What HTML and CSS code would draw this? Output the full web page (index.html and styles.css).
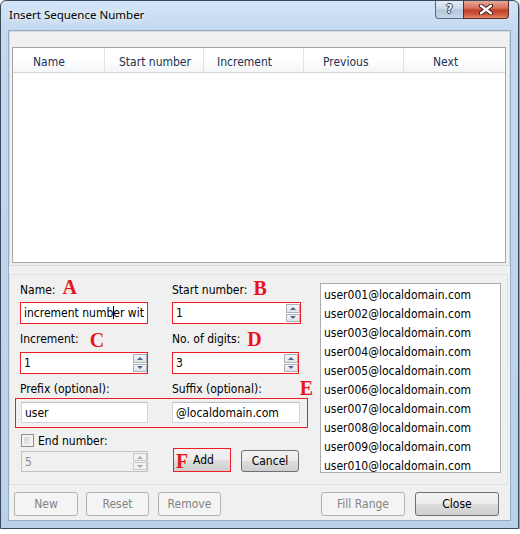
FILE: index.html
```html
<!DOCTYPE html>
<html>
<head>
<meta charset="utf-8">
<title>Insert Sequence Number</title>
<link rel="stylesheet" href="styles.css">
</head>
<body>
<div class="window">
  <div class="titlebar">
    <span class="title">Insert Sequence Number</span>
    <div class="caption-btns">
      <div class="cap-help">?</div>
      <div class="cap-close">
        <svg width="16" height="11" viewBox="0 0 16 11">
          <path d="M3 1.8 L13 9.2 M13 1.8 L3 9.2" stroke="#3d1a12" stroke-width="4.2" stroke-linecap="round" fill="none"/>
          <path d="M3 1.8 L13 9.2 M13 1.8 L3 9.2" stroke="#ffffff" stroke-width="2.4" stroke-linecap="round" fill="none"/>
        </svg>
      </div>
    </div>
  </div>
  <div class="client">
    <div class="top-panel">
      <div class="listview">
        <div class="lv-header">
          <div class="lv-col c1">Name</div>
          <div class="lv-col c2">Start number</div>
          <div class="lv-col c3">Increment</div>
          <div class="lv-col c4">Previous</div>
          <div class="lv-col c5">Next</div>
        </div>
      </div>
    </div>
    <div class="form-panel">
      <div class="form">
        <div class="row r-label1">
          <div class="lbl">Name:<span class="mark m-a">A</span></div>
          <div class="lbl">Start number:<span class="mark m-b">B</span></div>
        </div>
        <div class="row r-input1">
          <div class="field red"><span class="val">increment numb<span class="caret"></span>er wit</span></div>
          <div class="field red"><span class="val">1</span>
            <div class="spinner"><div class="spin-btn"><i class="arr-up"></i></div><div class="spin-btn"><i class="arr-down"></i></div></div>
          </div>
        </div>
        <div class="row r-label2">
          <div class="lbl">Increment:<span class="mark m-c">C</span></div>
          <div class="lbl">No. of digits:<span class="mark m-d">D</span></div>
        </div>
        <div class="row r-input2">
          <div class="field red"><span class="val">1</span>
            <div class="spinner"><div class="spin-btn"><i class="arr-up"></i></div><div class="spin-btn"><i class="arr-down"></i></div></div>
          </div>
          <div class="field red narrow"><span class="val">3</span>
            <div class="spinner"><div class="spin-btn"><i class="arr-up"></i></div><div class="spin-btn"><i class="arr-down"></i></div></div>
          </div>
        </div>
        <div class="row r-label3">
          <div class="lbl">Prefix (optional):</div>
          <div class="lbl lbl-e">Suffix (optional):<span class="mark m-e">E</span></div>
        </div>
        <div class="redbox">
          <div class="field plain"><span class="val">user</span></div>
          <div class="field plain"><span class="val">@localdomain.com</span></div>
        </div>
        <div class="row r-check">
          <div class="chk-wrap"><span class="chk"></span><span>End number:</span></div>
        </div>
        <div class="row r-last">
          <div class="field disabled"><span class="val">5</span>
            <div class="spinner dis"><div class="spin-btn"><i class="arr-up"></i></div><div class="spin-btn"><i class="arr-down"></i></div></div>
          </div>
          <div class="btn-pair">
            <div class="btn btn-add"><span class="mark m-f">F</span>Add</div>
            <div class="btn btn-cancel">Cancel</div>
          </div>
        </div>
      </div>
      <div class="listbox">
        <div class="li">user001@localdomain.com</div>
        <div class="li">user002@localdomain.com</div>
        <div class="li">user003@localdomain.com</div>
        <div class="li">user004@localdomain.com</div>
        <div class="li">user005@localdomain.com</div>
        <div class="li">user006@localdomain.com</div>
        <div class="li">user007@localdomain.com</div>
        <div class="li">user008@localdomain.com</div>
        <div class="li">user009@localdomain.com</div>
        <div class="li">user010@localdomain.com</div>
      </div>
    </div>
    <div class="btn-row">
      <div class="btn dis b-new">New</div>
      <div class="btn dis b-reset">Reset</div>
      <div class="btn dis b-remove">Remove</div>
      <div class="btn dis b-fill">Fill Range</div>
      <div class="btn b-close">Close</div>
    </div>
  </div>
</div>
</body>
</html>
```

FILE: styles.css
```css
* { box-sizing: border-box; }
body {
  margin: 0;
  background: #ffffff;
  font-family: "DejaVu Sans Condensed", "DejaVu Sans", sans-serif;
  font-stretch: semi-condensed;
  font-size: 12px;
  color: #000;
}
.window {
  width: 519px;
  height: 529px;
  border: 1px solid #3a4a5c;
  border-radius: 6px 6px 0 0;
  background: linear-gradient(to bottom, #d3e5f7 0, #c3d9f0 29px, #b9d1ea 100%);
  padding: 0 7px 7px 7px;
  box-shadow: 3px 3px 5px rgba(0,0,0,0.45);
  display: flex;
  flex-direction: column;
}
.titlebar {
  height: 29px;
  display: flex;
  align-items: flex-start;
  justify-content: space-between;
  flex: none;
}
.title {
  margin-left: 1px;
  margin-top: 7px;
  font-family: "Noto Sans", "Open Sans", sans-serif;
  font-stretch: normal;
  font-size: 11.5px;
  line-height: 14px;
  color: #000;
  text-shadow: 0 0 6px #eef6ff, 0 0 10px #ffffff;
}
.caption-btns {
  display: flex;
  margin-right: 2px;
}
.cap-help {
  width: 28px;
  height: 18px;
  border: 1px solid #5b6b7e;
  border-top: none;
  border-right: none;
  border-radius: 0 0 0 4px;
  background: linear-gradient(to bottom, #e3ecf6 0, #cbd9e9 45%, #b3c6dc 55%, #c8d8ea 100%);
  color: #fff;
  font-family: "DejaVu Sans", sans-serif;
  font-weight: bold;
  font-size: 12px;
  line-height: 17px;
  text-align: center;
  text-shadow: 1px 0 0 #2c3d52, -1px 0 0 #2c3d52, 0 1px 0 #2c3d52, 0 -1px 0 #2c3d52;
}
.cap-close {
  width: 46px;
  height: 18px;
  border: 1px solid #5e2d25;
  border-top: none;
  border-radius: 0 0 4px 0;
  background: linear-gradient(to bottom, #e9a898 0, #d8735e 40%, #c4412b 55%, #cf5a41 80%, #e08a6c 100%);
  display: flex;
  align-items: center;
  justify-content: center;
}
.client {
  flex: 1;
  background: #f0f0f0;
  border: 1px solid #9aabbd;
  display: flex;
  flex-direction: column;
}
.top-panel {
  height: 235px;
  border: 1px solid #d3dae2;
  padding: 15px 3px 2px 2px;
  flex: none;
}
.listview {
  height: 216px;
  background: #fff;
  border: 1px solid #a5a5a5;
}
.lv-header {
  display: flex;
  height: 25px;
  border-bottom: 1px solid #d5d5d5;
  background: linear-gradient(to bottom, #ffffff 0, #ffffff 50%, #f4f5f7 100%);
}
.lv-col {
  border-right: 1px solid #e2e3e5;
  color: #1e3152;
  padding-top: 5px;
  line-height: 18px;
  white-space: nowrap;
}
.c1 { width: 92px; padding-left: 20px; }
.c2 { width: 99px; padding-left: 14px; }
.c3 { width: 100px; padding-left: 13px; }
.c4 { width: 100px; padding-left: 19px; }
.c5 { width: 101px; padding-left: 29px; border-right: none; }

.form-panel {
  margin-top: 8px;
  margin-right: 2px;
  height: 211px;
  border: 1px solid #dae1e8;
  padding: 8px 6px 11px 10px;
  display: flex;
  flex: none;
}
.form {
  width: 282px;
  display: flex;
  flex-direction: column;
}
.row {
  display: grid;
  grid-template-columns: 128px 129px;
  column-gap: 24px;
}
.lbl {
  height: 14px;
  line-height: 14px;
  display: flex;
  align-items: center;
  white-space: nowrap;
}
.r-input1 { margin-top: 5px; }
.r-label2 { margin-top: 8px; }
.r-input2 { margin-top: 6px; }
.r-label3 { margin-top: 8px; }
.mark {
  color: #e8151c;
  font-family: "Liberation Serif", serif;
  font-stretch: normal;
  font-weight: bold;
  font-size: 20px;
  line-height: 14px;
}
.m-a { margin-left: 7px; transform: translateY(-3px); }
.m-b { margin-left: 6px; transform: translateY(-2px); }
.m-c { margin-left: 11px; transform: translateY(1px); }
.m-d { margin-left: 7px; transform: translateY(0px); }
.lbl-e { overflow: visible; }
.m-e { margin-left: auto; margin-right: -12px; transform: translateY(-1px); }

.field {
  height: 22px;
  background: #fff;
  border: 1px solid #abadb3;
  display: flex;
  align-items: center;
  padding-left: 3px;
  overflow: hidden;
}
.field.red { border-color: #ee1c25; }
.field.narrow { width: 127px; }
.val {
  flex: 1;
  white-space: nowrap;
  overflow: hidden;
  line-height: 14px;
}
.caret {
  display: inline-block;
  width: 1px;
  height: 13px;
  background: #000;
  vertical-align: -2px;
  margin-right: -1px;
}
.spinner {
  width: 14px;
  align-self: stretch;
  margin: 1px 0 1px 0;
  display: flex;
  flex-direction: column;
  gap: 1px;
}
.spin-btn {
  flex: 1;
  border: 1px solid #adb1b7;
  background: linear-gradient(to bottom, #f6f7f9, #dfe3e8);
  display: flex;
  align-items: center;
  justify-content: center;
}
.arr-up {
  width: 0; height: 0;
  border-left: 3px solid transparent;
  border-right: 3px solid transparent;
  border-bottom: 3px solid #4d6390;
}
.arr-down {
  width: 0; height: 0;
  border-left: 3px solid transparent;
  border-right: 3px solid transparent;
  border-top: 3px solid #4d6390;
}
.spinner.dis .spin-btn { border-color: #c9c9c9; background: #f2f2f2; }
.spinner.dis .arr-up { border-bottom-color: #a9a9a9; }
.spinner.dis .arr-down { border-top-color: #a9a9a9; }

.redbox {
  margin-top: 2px;
  margin-left: -5px;
  width: 293px;
  height: 30px;
  border: 1px solid #ee1c25;
  padding: 3px 7px 0 5px;
  display: grid;
  grid-template-columns: 127px 128px;
  column-gap: 24px;
  align-items: start;
}
.field.plain {
  height: 21px;
  border-color: #d2d8de;
  border-top-color: #b9bfc6;
}
.r-check { margin-top: 6px; }
.chk-wrap {
  display: flex;
  align-items: center;
  height: 13px;
  margin-left: 1px;
  gap: 4px;
  white-space: nowrap;
}
.chk {
  width: 13px;
  height: 13px;
  border: 1px solid #8e8f8f;
  background: linear-gradient(135deg, #cfcfcf, #f5f5f5);
  box-shadow: inset 0 0 0 2px #f4f4f4;
  flex: none;
}
.r-last {
  margin-top: 1px;
  height: 24px;
  align-items: end;
}
.field.disabled {
  width: 127px;
  height: 21px;
  margin-left: 1px;
  background: #f0f0f0;
  border-color: #c2c2c2;
  color: #8b8e94;
}
.btn-pair {
  display: flex;
  align-items: flex-end;
  margin-left: 1px;
}
.btn {
  height: 24px;
  border: 1px solid #707070;
  border-radius: 3px;
  background: linear-gradient(to bottom, #f2f2f2 0, #ebebeb 50%, #dddddd 51%, #cfcfcf 100%);
  display: flex;
  align-items: center;
  justify-content: center;
  white-space: nowrap;
  flex: none;
}
.btn-add {
  width: 58px;
  border-color: #ee1c25;
  border-radius: 0;
  position: relative;
  padding-left: 3px;
}
.m-f { position: absolute; left: 2px; top: 5px; }
.btn-cancel {
  width: 58px;
  height: 22px;
  margin-left: 10px;
}
.listbox {
  margin-left: 18px;
  width: 181px;
  height: 190px;
  border: 1px solid #abadb3;
  background: #fff;
  padding: 2px 0 0 3px;
  overflow: hidden;
}
.li {
  height: 19px;
  line-height: 19px;
  white-space: nowrap;
}
.btn-row {
  margin-top: 7px;
  padding: 0 11px 0 5px;
  display: flex;
  height: 24px;
  flex: none;
}
.btn.dis {
  border-color: #adb2b5;
  background: #f4f4f4;
  color: #838383;
}
.b-new { width: 64px; }
.b-reset { width: 63px; margin-left: 8px; }
.b-remove { width: 63px; margin-left: 9px; }
.b-fill { width: 84px; margin-left: auto; }
.b-close { width: 84px; margin-left: 10px; }
```
